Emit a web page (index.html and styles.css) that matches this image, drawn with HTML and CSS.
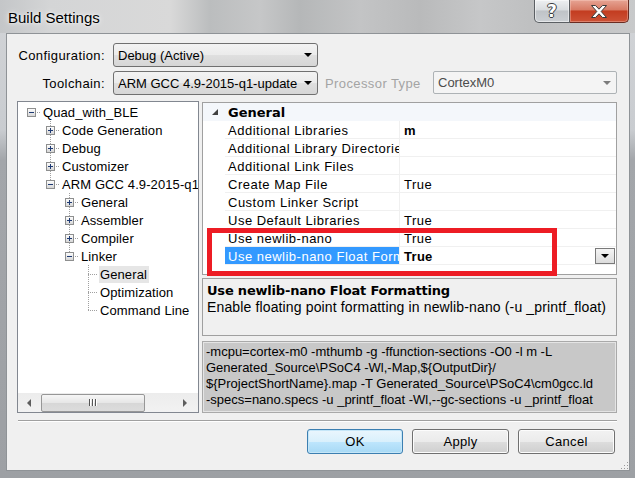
FILE: index.html
```html
<!DOCTYPE html>
<html>
<head>
<meta charset="utf-8">
<title>Build Settings</title>
<link rel="stylesheet" href="styles.css">
</head>
<body>
<div class="window">
  <div class="titlebar">
    <span class="title">Build Settings</span>
    <div class="caption-btns">
      <div class="cbtn help"><span class="qmark">?</span></div>
      <div class="cbtn close">
        <svg width="16" height="13" viewBox="0 0 16 13"><path d="M0.5 0.5H4.5L8 4.2L11.5 0.5H15.5L10.2 6.5L15.5 12.5H11.5L8 8.8L4.5 12.5H0.5L5.8 6.5Z" fill="#fff" stroke="#3a3a3a" stroke-width="1"/></svg>
      </div>
    </div>
  </div>
  <div class="client">
    <div class="row row1">
      <span class="lbl">Configuration:</span>
      <div class="combo wide"><span class="ctext">Debug (Active)</span><span class="arrow"></span></div>
    </div>
    <div class="row row2">
      <span class="lbl">Toolchain:</span>
      <div class="combo wide"><span class="ctext">ARM GCC 4.9-2015-q1-update</span><span class="arrow"></span></div>
      <span class="lbl-dis">Processor Type</span>
      <div class="combo disabled"><span class="ctext">CortexM0</span><span class="arrow dis"></span></div>
    </div>
    <div class="main">
      <div class="tree">
        <div class="tree-items">
          <div class="trow"><span class="g g-h"><span class="exp minus"></span></span><span class="tl">Quad_with_BLE</span></div>
          <div class="trow"><span class="g"></span><span class="g g-t"><span class="exp plus"></span></span><span class="tl">Code Generation</span></div>
          <div class="trow"><span class="g"></span><span class="g g-t"><span class="exp plus"></span></span><span class="tl">Debug</span></div>
          <div class="trow"><span class="g"></span><span class="g g-t"><span class="exp plus"></span></span><span class="tl">Customizer</span></div>
          <div class="trow"><span class="g"></span><span class="g g-l"><span class="exp minus"></span></span><span class="tl">ARM GCC 4.9-2015-q1-update</span></div>
          <div class="trow"><span class="g"></span><span class="g"></span><span class="g g-t"><span class="exp plus"></span></span><span class="tl">General</span></div>
          <div class="trow"><span class="g"></span><span class="g"></span><span class="g g-t"><span class="exp plus"></span></span><span class="tl">Assembler</span></div>
          <div class="trow"><span class="g"></span><span class="g"></span><span class="g g-t"><span class="exp plus"></span></span><span class="tl">Compiler</span></div>
          <div class="trow"><span class="g"></span><span class="g"></span><span class="g g-l"><span class="exp minus"></span></span><span class="tl">Linker</span></div>
          <div class="trow"><span class="g"></span><span class="g"></span><span class="g"></span><span class="g g-t"></span><span class="tl sel">General</span></div>
          <div class="trow"><span class="g"></span><span class="g"></span><span class="g"></span><span class="g g-t"></span><span class="tl">Optimization</span></div>
          <div class="trow"><span class="g"></span><span class="g"></span><span class="g"></span><span class="g g-l"></span><span class="tl">Command Line</span></div>
        </div>
        <div class="hscroll">
          <span class="sb-arrow left"></span>
          <span class="sb-thumb"><span class="grip"></span></span>
          <span class="sb-fill"></span>
          <span class="sb-arrow right"></span>
        </div>
      </div>
      <div class="rightcol">
        <div class="pgrid">
          <div class="pg-head">
            <span class="gut"><svg width="6" height="6" viewBox="0 0 6 6"><path d="M6 0V6H0Z" fill="#404040"/></svg></span>
            <span class="cat">General</span>
          </div>
          <div class="pg-row"><span class="gut"></span><span class="pn">Additional Libraries</span><span class="pv b">m</span></div>
          <div class="pg-row"><span class="gut"></span><span class="pn">Additional Library Directories</span><span class="pv"></span></div>
          <div class="pg-row"><span class="gut"></span><span class="pn">Additional Link Files</span><span class="pv"></span></div>
          <div class="pg-row"><span class="gut"></span><span class="pn">Create Map File</span><span class="pv">True</span></div>
          <div class="pg-row"><span class="gut"></span><span class="pn">Custom Linker Script</span><span class="pv"></span></div>
          <div class="pg-row"><span class="gut"></span><span class="pn">Use Default Libraries</span><span class="pv">True</span></div>
          <div class="pg-row"><span class="gut"></span><span class="pn">Use newlib-nano</span><span class="pv">True</span></div>
          <div class="pg-row"><span class="gut"></span><span class="pn selected">Use newlib-nano Float Formatting</span><span class="pv b"><span class="vt">True</span><span class="dd"><span class="arrow"></span></span></span></div>
        </div>
        <div class="desc">
          <div class="desc-title">Use newlib-nano Float Formatting</div>
          <div class="desc-text">Enable floating point formatting in newlib-nano (-u _printf_float)</div>
        </div>
        <div class="cmd">-mcpu=cortex-m0 -mthumb -g -ffunction-sections -O0 -l m -L<br>Generated_Source\PSoC4 -Wl,-Map,${OutputDir}/<br>${ProjectShortName}.map -T Generated_Source\PSoC4\cm0gcc.ld<br>-specs=nano.specs -u _printf_float -Wl,--gc-sections -u _printf_float</div>
      </div>
    </div>
    <div class="sep"></div>
    <div class="buttons">
      <div class="btn default">OK</div>
      <div class="btn">Apply</div>
      <div class="btn">Cancel</div>
    </div>
    <div class="grip-corner"></div>
  </div>
  <div class="annot"></div>
</div>
</body>
</html>
```
FILE: styles.css
```css
* { box-sizing: border-box; }
html, body { margin: 0; padding: 0; }
body {
  width: 635px; height: 478px; overflow: hidden;
  font-family: "Liberation Sans", Arial, sans-serif;
  font-size: 13px; color: #000;
}
.window {
  position: relative; width: 635px; height: 478px;
  display: flex; flex-direction: column;
  background: linear-gradient(to bottom, #d2d4d7 0, #c9ccd0 130px, #a3a6aa 160px, #9da0a4 100%);
}
.titlebar {
  height: 33px; display: flex; align-items: flex-start;
  background: linear-gradient(to right, #c4c6c8 0, #d4d5d6 50px, #d9d9d9 170px, #bbbdbe 210px, #c6c7c8 260px, #b5b7b8 300px, #c3c4c5 360px, #b9babb 420px, #c6c7c8 480px, #bfc0c1 530px, #c8c9ca 635px);
}
.title {
  font-size: 15px; line-height: 18px; margin: 9px 0 0 8px;
  text-shadow: 0 0 6px rgba(255,255,255,0.9), 0 0 3px rgba(255,255,255,0.8);
}
.caption-btns { margin-left: auto; margin-right: 6px; display: flex; }
.cbtn { height: 23px; display: flex; align-items: center; justify-content: center; border: 1px solid #5b5f63; border-top: none; }
.help {
  width: 36px; border-radius: 0 0 0 5px;
  background: linear-gradient(#eef0f2 0, #d9dcdf 45%, #bfc3c7 50%, #cbcfd3 100%);
  box-shadow: inset 0 0 0 1px rgba(255,255,255,0.5);
}
.qmark {
  font-family: "DejaVu Sans", sans-serif; font-weight: bold; font-size: 17px; color: #fff; line-height: 20px;
  text-shadow: 1px 0 0 #3a3d40, -1px 0 0 #3a3d40, 0 1px 0 #3a3d40, 0 -1px 0 #3a3d40;
}
.close {
  width: 59px; border-left: none; border-radius: 0 0 5px 0; border-color: #6a2c22;
  background: linear-gradient(#e6a494 0, #d77a64 45%, #c33c20 50%, #cd5236 100%);
  box-shadow: inset 0 0 0 1px rgba(255,220,210,0.35);
}
.client {
  flex: 1; margin: 0 5px 7px 6px;
  border: 1px solid #8f9397; background: #f0f0f0;
  padding: 0 12px 0 10px; position: relative;
}
.row { display: flex; align-items: center; height: 24px; }
.row1 { margin-top: 9px; }
.row2 { margin-top: 4px; }
.lbl { width: 88px; text-align: right; margin-right: 8px; letter-spacing: 0.4px; white-space: nowrap; }
.combo {
  height: 24px; border: 1px solid #707070; border-radius: 3px;
  background: linear-gradient(#f3f3f3 0, #ebebeb 50%, #dfdfdf 51%, #d6d6d6 100%);
  display: flex; align-items: center; padding: 0 5px 0 4px;
}
.combo.wide { width: 205px; }
.ctext { flex: 1; white-space: nowrap; overflow: hidden; }
.arrow { width: 0; height: 0; border-left: 4px solid transparent; border-right: 4px solid transparent; border-top: 4px solid #000; }
.arrow.dis { border-top-color: #7c7c7c; }
.lbl-dis { color: #a4a4a4; margin-left: 7px; width: 100px; margin-right: 8px; white-space: nowrap; letter-spacing: 0.4px; }
.combo.disabled {
  width: 184px; height: 23px; align-self: flex-start; border-color: #adb2b5; border-radius: 2px;
  background: #f4f4f4; color: #4c4c4c; padding-right: 5px;
}
.main { display: flex; margin-top: 6px; height: 312px; }
.tree {
  width: 182px; border: 1px solid #828790; background: #fff;
  display: flex; flex-direction: column; letter-spacing: 0.1px;
}
.tree-items { flex: 1; padding: 1px 0 0 4px; overflow: hidden; }
.trow { display: flex; height: 18px; align-items: center; white-space: nowrap; min-width: 0; }
.g { width: 19px; height: 18px; flex: none; display: flex; align-items: center; }
.g-h {
  background: repeating-linear-gradient(to right, #a0a0a0 0 1px, transparent 1px 2px) 9px 9px / 10px 1px no-repeat;
}
.g-t {
  background:
    repeating-linear-gradient(to bottom, #a0a0a0 0 1px, transparent 1px 2px) 9px 0 / 1px 18px no-repeat,
    repeating-linear-gradient(to right, #a0a0a0 0 1px, transparent 1px 2px) 9px 9px / 10px 1px no-repeat;
}
.g-l {
  background:
    repeating-linear-gradient(to bottom, #a0a0a0 0 1px, transparent 1px 2px) 9px 0 / 1px 9px no-repeat,
    repeating-linear-gradient(to right, #a0a0a0 0 1px, transparent 1px 2px) 9px 9px / 10px 1px no-repeat;
}
.exp { width: 9px; height: 9px; margin-left: 5px; border: 1px solid #8e8f8f; background-color: #f4f4f4; }
.exp.minus { background: linear-gradient(#1e3a73, #1e3a73) center / 5px 1px no-repeat, linear-gradient(#fdfdfd, #d6d6d6); }
.exp.plus {
  background:
    linear-gradient(#1e3a73, #1e3a73) center / 5px 1px no-repeat,
    linear-gradient(#1e3a73, #1e3a73) center / 1px 5px no-repeat,
    linear-gradient(#fdfdfd, #d6d6d6);
}
.tl { margin-left: 1px; padding: 0 2px 0 1px; line-height: 17px; min-width: 0; overflow: hidden; }
.tl.sel { background: #e6e6e6; }
.hscroll { height: 19px; display: flex; align-items: center; background: linear-gradient(#ececec, #f2f2f2); }
.sb-arrow { width: 22px; height: 19px; display: flex; align-items: center; justify-content: center; }
.sb-arrow.left::before { content: ""; border-top: 4px solid transparent; border-bottom: 4px solid transparent; border-right: 4px solid #5e5e5e; }
.sb-arrow.right { width: 18px; margin-right: 4px; }
.sb-arrow.right::before { content: ""; border-top: 4px solid transparent; border-bottom: 4px solid transparent; border-left: 4px solid #5e5e5e; }
.sb-thumb {
  width: 104px; height: 18px; margin-left: 1px; border: 1px solid #979797; border-radius: 2px;
  background: linear-gradient(#f6f6f6, #e6e6e6 50%, #d7d7d7 51%, #dcdcdc);
  display: flex; align-items: center; justify-content: center;
}
.grip { width: 8px; height: 7px; background: repeating-linear-gradient(to right, #555 0 1px, #fff 1px 2px, transparent 2px 3px); }
.sb-fill { flex: 1; }
.rightcol { flex: 1; margin-left: 3px; display: flex; flex-direction: column; }
.pgrid { margin-top: 1px; height: 173px; border: 1px solid #a0a0a0; background: #fff; overflow: hidden; letter-spacing: 0.5px; }
.pg-head { height: 18px; display: flex; align-items: center; background: #f4f7fb; }
.gut { width: 22px; flex: none; display: flex; justify-content: center; padding-left: 1px; }
.cat { padding-left: 3px; padding-top: 1px; font-family: "DejaVu Sans", sans-serif; font-weight: bold; font-size: 13px; letter-spacing: 0; }
.pg-row { display: flex; height: 18px; }
.pn {
  width: 175px; flex: none; padding: 1px 0 0 3px; line-height: 17px; height: 18px;
  border-bottom: 1px solid #f0f0f0; border-right: 1px solid #f0f0f0;
  white-space: nowrap; overflow: hidden;
}
.pn.selected { background: #3399ff; color: #fff; }
.pv { flex: 1; padding: 1px 0 0 4px; line-height: 17px; height: 18px; border-bottom: 1px solid #f0f0f0; display: flex; align-items: center; }
.pv.b { font-weight: bold; letter-spacing: 0.3px; }
.vt { line-height: 17px; }
.dd {
  margin-left: auto; margin-right: 1px; margin-top: -1px; width: 20px; height: 16px; border: 1px solid #7a7a7a;
  background: linear-gradient(#f4f4f4, #dcdcdc); display: flex; align-items: center; justify-content: center;
}
.desc { margin-top: 3px; height: 58px; border: 1px solid #a0a0a0; padding: 4px 0 0 4px; line-height: 16px; }
.desc-title { font-family: "DejaVu Sans", sans-serif; font-weight: bold; font-size: 13px; letter-spacing: -0.2px; }
.desc-text { font-size: 14px; letter-spacing: 0.14px; }
.cmd {
  margin-top: 5px; height: 72px; border: 1px solid #a9a9a9; box-shadow: inset 0 0 0 1px #e4e4e4;
  background: #c8c8c8; padding: 2px 0 0 3px; line-height: 16px; white-space: nowrap; overflow: hidden;
}
.sep { margin: 7px 0 0 1px; border-top: 1px solid #a0a0a0; border-bottom: 1px solid #fff; }
.buttons { display: flex; justify-content: flex-end; gap: 9px; margin-top: 7px; margin-right: 2px; }
.btn {
  width: 97px; height: 25px; border: 1px solid #707070; border-radius: 3px;
  background: linear-gradient(#f2f2f2 0, #ebebeb 50%, #dddddd 51%, #cfcfcf 100%);
  box-shadow: inset 0 0 0 1px #fcfcfc; letter-spacing: 0.3px;
  display: flex; align-items: center; justify-content: center;
}
.btn.default {
  width: 96px; border-color: #3c7fb1;
  background: linear-gradient(#eaf6fd 0, #d9f0fc 50%, #bee6fd 51%, #a7d9f5 100%);
  box-shadow: inset 0 0 0 1px #c5e6f8;
}
.grip-corner {
  position: absolute; right: 1px; bottom: 1px; width: 8px; height: 8px;
  background: radial-gradient(circle, #9a9a9a 0.7px, transparent 1px) 0 0 / 3px 3px;
  clip-path: polygon(100% 0, 100% 100%, 0 100%);
}
.annot {
  position: absolute; left: 207px; top: 228px; width: 350px; height: 48px;
  border: 5px solid #ed1c24;
}
```
